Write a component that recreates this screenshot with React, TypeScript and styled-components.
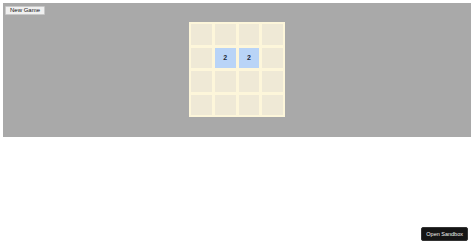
import React, { useState } from 'react';
import styled, { createGlobalStyle } from 'styled-components';

const GlobalStyle = createGlobalStyle`
  html, body {
    margin: 0;
    padding: 0;
    background: #ffffff;
  }
  body {
    padding: 3px;
    font-family: "Liberation Sans", Arial, sans-serif;
  }
`;

// 회색 게임 영역
const Stage = styled.div`
  background: #a9a9a9;
  height: 134px;
  padding: 3px 2px;
  box-sizing: border-box;
  display: flex;
  flex-direction: column;
  align-items: flex-start;
`;

const NewGameButton = styled.button`
  font-family: "Liberation Sans", Arial, sans-serif;
  font-size: 6px;
  line-height: 7px;
  padding: 0 4px;
  background: #f0f0f0;
  border: 1px solid #c8c8c8;
  border-radius: 1px;
  color: #111;
  cursor: pointer;
`;

const Board = styled.div`
  align-self: center;
  margin-top: 7px;
  width: 96px;
  height: 95px;
  box-sizing: border-box;
  padding: 2px;
  background: #fdf6da;
  display: grid;
  grid-template-columns: repeat(4, 1fr);
  grid-template-rows: repeat(4, 1fr);
  gap: 3px;
`;

const Cell = styled.div<{ $value: number }>`
  background: ${(p) => (p.$value ? '#b9d4f7' : '#efe9d6')};
  display: flex;
  align-items: center;
  justify-content: center;
  font-size: 7px;
  font-weight: bold;
  color: #1e2a3a;
`;

const SandboxButton = styled.button`
  position: fixed;
  right: 6px;
  bottom: 7px;
  background: #151515;
  color: #f4f4f4;
  border: 1px solid #333;
  border-radius: 2px;
  font-family: "Liberation Sans", Arial, sans-serif;
  font-size: 5.5px;
  padding: 3px 4px;
  cursor: pointer;
`;

const start = [0, 0, 0, 0, 0, 2, 2, 0, 0, 0, 0, 0, 0, 0, 0, 0];

export default function App() {
  const [cells, setCells] = useState<number[]>(start);

  return (
    <>
      <GlobalStyle />
      <Stage>
        <NewGameButton onClick={() => setCells(start)}>New Game</NewGameButton>
        <Board>
          {cells.map((v, i) => (
            <Cell key={i} $value={v}>
              {v ? v : ''}
            </Cell>
          ))}
        </Board>
      </Stage>
      <SandboxButton>Open Sandbox</SandboxButton>
    </>
  );
}
